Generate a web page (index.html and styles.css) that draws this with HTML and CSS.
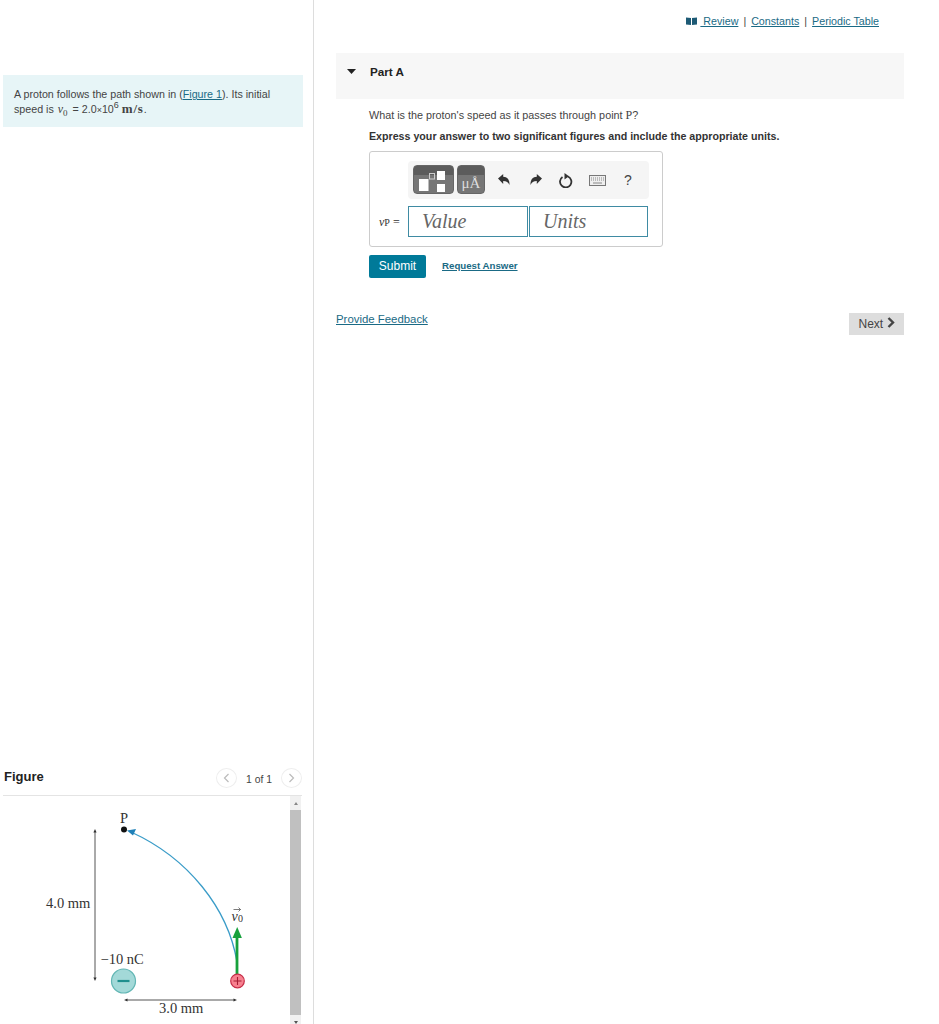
FILE: index.html
```html
<!DOCTYPE html>
<html lang="en">
<head>
<meta charset="utf-8">
<title>Part A</title>
<link rel="stylesheet" href="styles.css">
</head>
<body>
<div class="page">
  <aside class="left">
    <div class="intro">A proton follows the path shown in (<a href="#">Figure 1</a>). Its initial speed is <span class="speed"><i class="math">v</i><sub class="math">0</sub></span> = 2.0<span class="times">×</span>10<sup>6</sup> <span class="unit">m/s</span>.</div>
    <div class="figure">
      <div class="fig-head">
        <b class="fig-title">Figure</b>
        <div class="pager">
          <span class="pager-btn"><svg width="7" height="10" viewBox="0 0 7 10"><path d="M5.5 1 1.5 5l4 4" fill="none" stroke="#bbb" stroke-width="1.2"/></svg></span>
          <span class="pager-text">1 of 1</span>
          <span class="pager-btn"><svg width="7" height="10" viewBox="0 0 7 10"><path d="M1.5 1l4 4-4 4" fill="none" stroke="#bbb" stroke-width="1.2"/></svg></span>
        </div>
      </div>
      <div class="fig-body">
        <svg class="diagram" width="287" height="229" viewBox="3 796 287 229">
          <text x="124" y="823" class="fig-text" text-anchor="middle">P</text>
          <circle cx="124" cy="829.5" r="3" fill="#111"/>
          <path d="M95 831V979" stroke="#555" fill="none"/>
          <path d="M95 829l-1.6 3.5h3.2zM95 981l-1.6-3.5h3.2z" fill="#333"/>
          <text x="46" y="908" class="fig-text">4.0 mm</text>
          <path d="M237 962C228 908 188 858 131 832" stroke="#3a9cc8" stroke-width="1.3" fill="none"/>
          <path d="M127 830.500l9-1.500-3 6.500z" fill="#1f80b8"/>
          <text x="231.500" y="921" class="fig-text fig-v">v</text>
          <text x="238" y="922" class="fig-sub">0</text>
          <path d="M233.500 909.500h7M238.500 907.500l2 2-2 2" stroke="#444" stroke-width=".7" fill="none"/>
          <path d="M237 974V936" stroke="#17a13c" stroke-width="2.8" fill="none"/>
          <path d="M237.200 927l-4.700 11h9.400z" fill="#17a13c"/>
          <circle cx="237.500" cy="981" r="6.800" fill="#f7808f" stroke="#c62d47" stroke-width="1.200"/>
          <path d="M233.500 981h8M237.500 977v8" stroke="#a61c33" stroke-width="1.100"/>
          <text x="100.500" y="964" class="fig-text">−10 nC</text>
          <circle cx="123.500" cy="981" r="12" fill="#a3d9d8" stroke="#62b6b4" stroke-width="1.200"/>
          <path d="M117.500 981h12" stroke="#1f8f8e" stroke-width="2.200"/>
          <path d="M126 1000H235" stroke="#555" fill="none"/>
          <path d="M124 1000l3.500-1.600v3.200zM237 1000l-3.500-1.600v3.200z" fill="#333"/>
          <text x="159" y="1013" class="fig-text">3.0 mm</text>
        </svg>
        <div class="scrollbar">
          <span class="scroll-up"></span>
          <span class="scroll-thumb"></span>
          <span class="scroll-down"></span>
        </div>
      </div>
    </div>
  </aside>
  <main class="right">
    <div class="top-links">
      <svg class="book" width="11" height="8" viewBox="0 0 11 8"><path d="M0 .5 5 1v7L0 7.400zM11 .5 6 1v7l5-.6z" fill="#1d5a75"/></svg>
      <a class="review" href="#">&nbsp;Review</a><span class="sep">|</span><a href="#">Constants</a><span class="sep">|</span><a href="#">Periodic Table</a>
    </div>
    <div class="part-head">
      <svg class="caret" width="9" height="5" viewBox="0 0 9 5"><path d="M0 0h9L4.500 5z" fill="#222"/></svg>
      <b>Part A</b>
    </div>
    <div class="part-body">
      <p class="question">What is the proton's speed as it passes through point <span class="serif">P</span>?</p>
      <p class="instruction">Express your answer to two significant figures and include the appropriate units.</p>
      <div class="answer-box">
        <div class="toolbar">
          <span class="tool tool-wide">
            <svg width="41" height="29" viewBox="0 0 41 29"><rect x="6" y="14" width="9.500" height="12" fill="#fff"/><rect x="16.500" y="8.500" width="5" height="5.500" fill="none" stroke="#ccc"/><rect x="24" y="6" width="8" height="9" fill="#fff"/><rect x="24" y="19" width="8" height="8" fill="#fff"/></svg>
          </span>
          <span class="tool tool-unit"><span class="tool-label">μÅ</span></span>
          <svg class="tb-icon tb-undo" width="14" height="14" viewBox="0 0 14 14"><path d="M1 5.500 6.200 1v2.800c4 .2 6.500 2.700 6.300 8.200-1.200-2.600-3-3.800-6.300-4V11z" fill="#333"/></svg>
          <svg class="tb-icon tb-redo" width="14" height="14" viewBox="0 0 14 14"><path d="M13 5.500 7.800 1v2.800c-4 .2-6.500 2.700-6.300 8.200 1.200-2.600 3-3.800 6.300-4V11z" fill="#333"/></svg>
          <svg class="tb-icon tb-reset" width="14" height="15" viewBox="0 0 14 15"><path d="M9 3.500A5.700 5.700 0 1 1 3.500 4" fill="none" stroke="#333" stroke-width="1.800"/><path d="M5.500 0v6.500L10 3.200z" fill="#333"/></svg>
          <svg class="tb-icon tb-keys" width="17" height="11" viewBox="0 0 17 11"><rect x=".5" y=".5" width="16" height="10" fill="#eee" stroke="#777"/><path d="M2 3h13M2 5h13" stroke="#888" stroke-dasharray="1 1"/><path d="M4 8h9" stroke="#888"/></svg>
          <span class="tb-help">?</span>
        </div>
        <div class="inputs">
          <span class="var-label"><i>v</i><span class="var-sub">P</span> =</span>
          <span class="field field-value">Value</span>
          <span class="field field-units">Units</span>
        </div>
      </div>
      <div class="actions">
        <button class="submit" type="button">Submit</button>
        <a class="request" href="#">Request Answer</a>
      </div>
    </div>
    <div class="footer">
      <a class="feedback" href="#">Provide Feedback</a>
      <span class="next">Next <svg width="8" height="11" viewBox="0 0 8 11"><path d="M1.500 1l4.500 4.500L1.500 10" fill="none" stroke="#444" stroke-width="2.400"/></svg></span>
    </div>
  </main>
</div>
</body>
</html>
```
FILE: styles.css
```css
html, body {
  margin: 0;
  padding: 0;
  background: #fff;
}
body {
  font-family: "Liberation Sans", Arial, sans-serif;
  font-size: 11px;
  color: #333;
}
a {
  color: #1a6a85;
}
.page {
  display: flex;
  height: 1024px;
  overflow: hidden;
}
.left {
  width: 314px;
  flex: none;
  box-sizing: border-box;
  border-right: 1px solid #ddd;
  padding: 75px 0 0 3px;
  display: flex;
  flex-direction: column;
}
.intro {
  flex: none;
  width: 300px;
  height: 52px;
  box-sizing: border-box;
  background: #e7f5f7;
  padding: 12px 11px 0;
  line-height: 15px;
  font-size: 10.700px;
  color: #444;
}
.math {
  font-family: "Liberation Serif", serif;
}
.speed {
  margin: 0 2px 0 1px;
  font-size: 12px;
  line-height: 0;
}
.times {
  font-size: 9px;
}
.intro sub, .intro sup {
  font-size: 9px;
  line-height: 0;
}
.unit {
  font-family: "Liberation Serif", serif;
  font-weight: bold;
  font-size: 13px;
  line-height: 0;
  letter-spacing: .8px;
}
.figure {
  flex: none;
  margin-top: 637px;
  width: 299px;
}
.fig-head {
  display: flex;
  justify-content: space-between;
  align-items: center;
  height: 32px;
  box-sizing: border-box;
  padding: 0 0 3px 1px;
  border-bottom: 1px solid #e4e4e4;
}
.fig-title {
  font-size: 13px;
  color: #222;
  margin-bottom: 4px;
}
.pager {
  display: flex;
  align-items: center;
  gap: 9px;
}
.pager-btn {
  width: 21px;
  height: 20px;
  box-sizing: border-box;
  border: 1px solid #eee;
  border-radius: 50%;
  display: flex;
  align-items: center;
  justify-content: center;
}
.pager-text {
  font-size: 10.400px;
  color: #444;
  margin-top: 2px;
}
.fig-body {
  display: flex;
  height: 229px;
}
.diagram {
  display: block;
  flex: none;
}
.fig-text {
  font-family: "Liberation Serif", serif;
  font-size: 14.500px;
  fill: #333;
}
.fig-v {
  font-style: italic;
  font-size: 14px;
}
.fig-sub {
  font-family: "Liberation Serif", serif;
  font-size: 10px;
  fill: #333;
}
.scrollbar {
  width: 11px;
  background: #f1f1f1;
  display: flex;
  flex-direction: column;
  align-items: center;
}
.scroll-up {
  margin-top: 6px;
  border: 2.500px solid transparent;
  border-top: 0;
  border-bottom: 3px solid #888;
  height: 0;
  width: 0;
}
.scroll-thumb {
  width: 11px;
  height: 205px;
  margin-top: 5px;
  background: #c0c0c0;
}
.scroll-down {
  margin-top: 6px;
  width: 0;
  height: 0;
  border: 2.500px solid transparent;
  border-bottom: 0;
  border-top: 3px solid #555;
}
.right {
  flex: 1;
  box-sizing: border-box;
  padding: 0 35px 0 22px;
  min-width: 0;
}
.top-links {
  height: 53px;
  box-sizing: border-box;
  padding: 15px 25px 0 0;
  display: flex;
  justify-content: flex-end;
  align-items: flex-start;
  font-size: 10.700px;
  line-height: 13px;
}
.book {
  margin-top: 2px;
}
.review {
  margin-left: 3px;
}
.sep {
  margin: 0 5px;
  color: #444;
}
.part-head {
  height: 46px;
  background: #f7f7f7;
  display: flex;
  align-items: flex-start;
  font-size: 11.700px;
  color: #222;
  padding-top: 12px;
  box-sizing: border-box;
  line-height: 14px;
}
.caret {
  margin: 4px 14px 0 11px;
}
.part-body {
  padding: 10px 0 0 33px;
}
.question {
  margin: 0;
  font-size: 10.800px;
  line-height: 13px;
  color: #444;
}
.serif {
  font-family: "Liberation Serif", serif;
  font-size: 12px;
}
.instruction {
  margin: 8px 0 0;
  font-weight: bold;
  font-size: 10.670px;
  line-height: 13px;
  color: #333;
}
.answer-box {
  width: 294px;
  height: 96px;
  box-sizing: border-box;
  border: 1px solid #ccc;
  border-radius: 3px;
  margin-top: 8px;
  padding: 9px 0 0 38px;
}
.toolbar {
  width: 241px;
  height: 38px;
  box-sizing: border-box;
  background: #f5f5f5;
  border-radius: 4px;
  display: flex;
  align-items: center;
  padding-left: 5px;
}
.tool {
  display: block;
  height: 29px;
  margin-top: -1px;
  box-sizing: border-box;
  border-radius: 4px;
  background: linear-gradient(#5c5c5c 0 34%, #767676 34%);
  border: 1px solid #666;
}
.tool-wide {
  width: 41px;
  overflow: hidden;
}
.tool-wide svg {
  display: block;
  margin: -1px;
}
.tool-unit {
  width: 28px;
  margin-left: 3px;
  text-align: center;
}
.tool-label {
  font-family: "Liberation Serif", serif;
  font-size: 15px;
  line-height: 35px;
  color: #ddd;
}
.tb-icon {
  flex: none;
}
.tb-undo {
  margin-left: 12px;
}
.tb-redo {
  margin-left: 18px;
}
.tb-reset {
  margin-left: 16px;
}
.tb-keys {
  margin-left: 16px;
}
.tb-help {
  font-size: 14px;
  color: #444;
  margin-left: 18px;
}
.inputs {
  display: flex;
  align-items: center;
  margin: 7px 0 0 -38px;
  height: 31px;
}
.var-label {
  width: 38px;
  margin-top: 1px;
  box-sizing: border-box;
  padding-left: 9px;
  font-family: "Liberation Serif", serif;
  font-size: 12px;
  color: #333;
}
.var-sub {
  font-size: 10px;
}
.field {
  height: 31px;
  box-sizing: border-box;
  border: 1px solid #3f8ba3;
  font-family: "Liberation Serif", serif;
  font-style: italic;
  font-size: 20px;
  line-height: 28px;
  color: #666;
}
.field-value {
  width: 120px;
  padding-left: 13px;
}
.field-units {
  width: 119px;
  margin-left: 1px;
  padding-left: 13px;
}
.actions {
  display: flex;
  align-items: center;
  margin-top: 8px;
}
.submit {
  width: 57px;
  height: 23px;
  border: 0;
  border-radius: 2px;
  background: #007a99;
  color: #fff;
  font-family: "Liberation Sans", Arial, sans-serif;
  font-size: 12px;
  padding: 0 0 2px;
}
.request {
  margin: 0 0 2px 16px;
  font-size: 9.700px;
  font-weight: bold;
}
.footer {
  display: flex;
  justify-content: space-between;
  align-items: flex-start;
  margin-top: 34px;
}
.feedback {
  font-size: 11.400px;
  line-height: 14px;
}
.next {
  width: 55px;
  height: 22px;
  margin-top: 1px;
  box-sizing: border-box;
  background: #ddd;
  font-size: 12px;
  line-height: 22px;
  text-align: center;
  color: #444;
}
```
